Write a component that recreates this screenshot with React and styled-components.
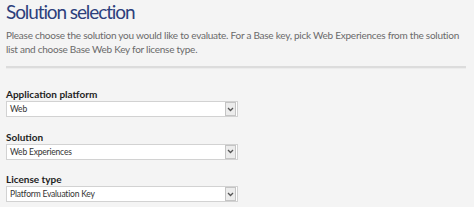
import React from "react";
import styled, { createGlobalStyle } from "styled-components";

const GlobalStyle = createGlobalStyle`
    html, body {
        margin: 0;
        padding: 0;
        background-color: #f4f4f4;
    }
`

const Page = styled.div`
    width: 474px;
    height: 207px;
    box-sizing: border-box;
    padding: 0 6px;
    background-color: #f4f4f4;
    font-family: Lato, "Open Sans", sans-serif;
    overflow: hidden;
`

const Title = styled.h1`
    margin: 0;
    font-size: 19px;
    font-weight: 400;
    line-height: 23px;
    letter-spacing: -1.1px;
    color: #2d3f7c;
`

const Intro = styled.p`
    margin: 5px 0 0 0;
    font-size: 10px;
    line-height: 14px;
    letter-spacing: -0.25px;
    white-space: nowrap;
    color: #6a6a6a;
`

const Divider = styled.div`
    height: 2px;
    margin: 10px 2px 0 0;
    background-color: #dcdcdc;
    border-bottom: 1px solid #ececec;
`

const Form = styled.div`
    display: flex;
    flex-direction: column;
    gap: 13.5px;
    margin-top: 19px;
`

const Field = styled.div`
    display: flex;
    flex-direction: column;
    gap: 1px;
`

const Label = styled.div`
    font-size: 10px;
    font-weight: 700;
    line-height: 12px;
    color: #1e1e1e;
`

const SelectBox = styled.div`
    width: 232px;
    height: 16px;
    box-sizing: border-box;
    display: flex;
    align-items: center;
    justify-content: space-between;
    background-color: #ffffff;
    border: 1px solid #d2d2d2;
    padding-left: 3px;
    font-size: 8.5px;
    letter-spacing: -0.2px;
    color: #333333;
`

const Arrow = styled.div`
    width: 11px;
    height: 14px;
    margin-right: 1px;
    box-sizing: border-box;
    display: flex;
    align-items: center;
    justify-content: center;
    background-color: #ececec;
    border: 1px solid #c4c4c4;
`

function Chevron() {
    return (
        <svg width="7" height="5" viewBox="0 0 7 5">
            <path d="M1 1 L3.5 3.5 L6 1" fill="none" stroke="#555" strokeWidth="1.3" />
        </svg>
    )
}

function Select({ value }) {
    return (
        <SelectBox>
            <span>{value}</span>
            <Arrow><Chevron /></Arrow>
        </SelectBox>
    )
}

export default function App() {
    return (
        <>
            <GlobalStyle />
            <Page>
                <Title>Solution selection</Title>
                <Intro>
                    Please choose the solution you would like to evaluate. For a Base key, pick Web Experiences from the solution
                    <br />
                    list and choose Base Web Key for license type.
                </Intro>
                <Divider />
                <Form>
                    <Field>
                        <Label>Application platform</Label>
                        <Select value="Web" />
                    </Field>
                    <Field>
                        <Label>Solution</Label>
                        <Select value="Web Experiences" />
                    </Field>
                    <Field>
                        <Label>License type</Label>
                        <Select value="Platform Evaluation Key" />
                    </Field>
                </Form>
            </Page>
        </>
    )
}
